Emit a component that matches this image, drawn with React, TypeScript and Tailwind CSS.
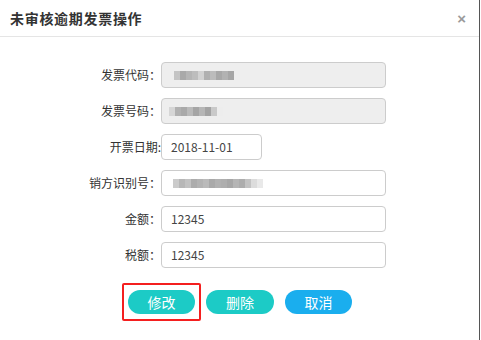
import React from 'react';

interface Field {
  label: string;
  value?: string;
  mosaic?: string[];
  mosaicOffset?: number;
  disabled?: boolean;
  short?: boolean;
}

// 打码的格子颜色
const m1 = ['#c4c4c4', '#a9a9a9', '#b5b5b5', '#bdbdbd', '#d2d2d2', '#b0b0b0', '#bcbcbc', '#a8a8a8', '#b2b2b2', '#a6a6a6'];
const m2 = ['#d6d6d6', '#b1b1b1', '#a9a9a9', '#bababa', '#a5a5a5', '#b6b6b6', '#a3a3a3', '#c9c9c9', '#ededed'];
const m3 = ['#cbcbcb', '#b7b7b7', '#c2c2c2', '#acacac', '#b3b3b3', '#bababa', '#a9a9a9', '#b1b1b1', '#aeaeae', '#a7a7a7', '#b5b5b5', '#adadad', '#c3c3c3', '#dcdcdc', '#e9e9e9'];

const fields: Field[] = [
  { label: '发票代码：', mosaic: m1, mosaicOffset: 3, disabled: true },
  { label: '发票号码：', mosaic: m2, mosaicOffset: -2, disabled: true },
  { label: '开票日期:', value: '2018-11-01', short: true },
  { label: '销方识别号：', mosaic: m3, mosaicOffset: 2 },
  { label: '金额：', value: '12345' },
  { label: '税额：', value: '12345' },
];

const font = { fontFamily: '"Noto Sans CJK SC", "Liberation Sans", sans-serif' };

const App: React.FC = () => {
  return (
    <div className="w-[481px] h-[340px] bg-white overflow-hidden" style={font}>
      <div className="w-[480px] h-[340px] border-r border-[#555] flex flex-col">
        {/* 标题栏 */}
        <div className="h-[37px] border-b border-[#e5e5e5] flex items-center justify-between pl-[10px] pr-[13px]">
          <h3 className="text-[14px] font-bold text-[#333] tracking-[0.7px]">未审核逾期发票操作</h3>
          <span className="text-[#9a9a9a] text-[15px] font-bold leading-none font-['Liberation_Sans',sans-serif]">×</span>
        </div>

        {/* 表单 */}
        <div className="flex flex-col gap-[10px] mt-[25px]">
          {fields.map((f, i) => (
            <div key={i} className="flex items-center h-[26px]">
              <label className="w-[161px] text-right text-[12px] text-[#333] whitespace-nowrap">{f.label}</label>
              <div
                className={`h-[26px] rounded-[4px] border border-[#ccc] flex items-center px-[9px] text-[12px] text-[#444] ${
                  f.short ? 'w-[101px]' : 'w-[225px]'
                } ${f.disabled ? 'bg-[#eee]' : 'bg-white'}`}
              >
                {f.value ? (
                  f.value
                ) : (
                  <div className="flex h-[9px] blur-[0.6px]" style={{ marginLeft: f.mosaicOffset }}>
                    {f.mosaic!.map((c, j) => (
                      <span key={j} className="w-[6px] h-[9px]" style={{ backgroundColor: c }} />
                    ))}
                  </div>
                )}
              </div>
            </div>
          ))}
        </div>

        {/* 按钮 */}
        <div className="flex items-center mt-[15px] ml-[122px]">
          <div className="rounded-[2px] border-2 border-[#f41f1f] w-[79px] h-[38px] flex items-center justify-center">
            <button className="w-[67px] h-[24px] rounded-full bg-[#1ccbc6] text-white text-[14px]">修改</button>
          </div>
          <button className="ml-[5px] w-[68px] h-[24px] rounded-full bg-[#1ccbc6] text-white text-[14px]">删除</button>
          <button className="ml-[11px] w-[67px] h-[24px] rounded-full bg-[#1aaeee] text-white text-[14px]">取消</button>
        </div>
      </div>
    </div>
  );
};

export default App;
